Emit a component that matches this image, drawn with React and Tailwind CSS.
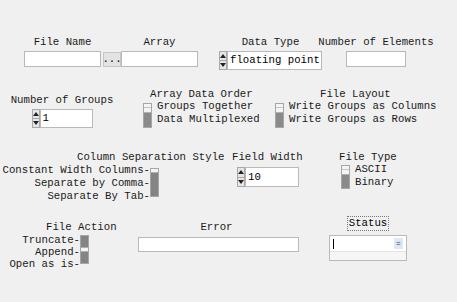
import React from 'react';

const font = { fontFamily: '"Liberation Mono", "DejaVu Sans Mono", monospace' };

const Label = ({ className = '', children }) => (
  <div className={`whitespace-pre leading-[13px] text-[10.7px] text-[#1a1a1a] ${className}`}>{children}</div>
);

const Box = ({ className = '', children }) => (
  <div className={`bg-white border border-[#b9b9b9] flex items-center pl-[2px] text-[10.7px] ${className}`}>{children}</div>
);

const Spin = ({ className = '' }) => (
  <div className={`w-[8px] flex flex-col border border-[#a8a8a8] bg-[#e6e6e6] ${className}`}>
    <div className="flex-1 flex items-center justify-center border-b border-[#a8a8a8]">
      <div className="w-0 h-0 border-l-[3px] border-r-[3px] border-b-[4px] border-l-transparent border-r-transparent border-b-[#222]" />
    </div>
    <div className="flex-1 flex items-center justify-center">
      <div className="w-0 h-0 border-l-[3px] border-r-[3px] border-t-[4px] border-l-transparent border-r-transparent border-t-[#222]" />
    </div>
  </div>
);

const Numeric = ({ value, w, h }) => (
  <div className="flex">
    <Spin className={h} />
    <Box className={`${w} ${h}`}>{value}</Box>
  </div>
);

// two-position vertical slide, thumb up, filled below
const Toggle = ({ className = '' }) => (
  <div className={`w-[9px] flex flex-col border border-[#a6a6a6] bg-[#8a8a8a] ${className}`}>
    <div className="h-[9px] bg-[#f4f4f4] border-b border-[#b0b0b0] flex flex-col">
      <div className="h-[4px] border-b border-[#c4c4c4]" />
    </div>
  </div>
);

const Choice = ({ options, gap = 'ml-[5px]', toggleTop = 'mt-[3px]', h = 'h-[25px]' }) => (
  <div className="flex items-start">
    <Toggle className={`${toggleTop} ${h}`} />
    <div className={`flex flex-col ${gap}`}>
      {options.map(o => <Label key={o}>{o}</Label>)}
    </div>
  </div>
);

export default function App() {
  return (
    <div className="w-[457px] h-[302px] bg-[#f0f0f0] overflow-hidden flex flex-col pt-[36px]" style={font}>
      {/* row 1 */}
      <div className="h-[52px] flex items-start pl-[24px]">
        <div className="w-[77px] flex flex-col items-center">
          <Label>File Name</Label>
          <Box className="mt-[2px] w-[77px] h-[16px]" />
        </div>
        <div className="ml-[2px] mt-[16px] w-[18px] h-[15px] bg-[#e3e3e3] border border-[#c6c6c6] text-[10.7px] leading-[13px] flex items-end justify-center">...</div>
        <div className="w-[77px] flex flex-col items-center">
          <Label>Array</Label>
          <Box className="mt-[2px] w-[77px] h-[16px]" />
        </div>
        <div className="ml-[21px] w-[103px] flex flex-col items-center">
          <Label>Data Type</Label>
          <div className="mt-[2px]">
            <Numeric value="floating point" w="w-[95px]" h="h-[19px]" />
          </div>
        </div>
        <div className="-ml-[4px] w-[116px] shrink-0 flex flex-col items-center">
          <Label>Number of Elements</Label>
          <Box className="mt-[2px] w-[60px] h-[16px]" />
        </div>
      </div>

      {/* row 2 */}
      <div className="h-[63px] flex items-start">
        <div className="ml-[11px] mt-[6px] w-[102px] flex flex-col items-center">
          <Label>Number of Groups</Label>
          <div className="mt-[2px]">
            <Numeric value="1" w="w-[53px]" h="h-[19px]" />
          </div>
        </div>
        <div className="ml-[30px] w-[132px] flex flex-col">
          <Label className="ml-[7px]">Array Data Order</Label>
          <div className="-mt-[1px]">
            <Choice options={['Groups Together', 'Data Multiplexed']} />
          </div>
        </div>
        <div className="flex flex-col">
          <Label className="ml-[45px]">File Layout</Label>
          <div className="-mt-[1px]">
            <Choice options={['Write Groups as Columns', 'Write Groups as Rows']} />
          </div>
        </div>
      </div>

      {/* row 3 */}
      <div className="h-[65px] flex items-start">
        <div className="w-[232px] flex flex-col">
          <Label className="ml-[77px]">Column Separation Style</Label>
          <div className="flex items-start">
            <div className="w-[150px] flex flex-col items-end">
              <Label>Constant Width Columns-</Label>
              <Label>Separate by Comma-</Label>
              <Label>Separate By Tab-</Label>
            </div>
            <div className="mt-[4px] w-[9px] h-[29px] flex flex-col border border-[#a6a6a6] bg-[#848484]">
              <div className="h-[4px] bg-[#f4f4f4] border-b border-[#b0b0b0]" />
            </div>
          </div>
        </div>
        <div className="w-[107px] flex flex-col">
          <Label>Field Width</Label>
          <div className="ml-[5px] mt-[3px]">
            <Numeric value="10" w="w-[54px]" h="h-[20px]" />
          </div>
        </div>
        <div className="flex flex-col">
          <Label>File Type</Label>
          <div className="ml-[2px] -mt-[1px]">
            <Choice options={['ASCII', 'Binary']} gap="ml-[5px]" toggleTop="mt-[2px]" h="h-[24px]" />
          </div>
        </div>
      </div>

      {/* row 4 */}
      <div className="flex items-start">
        <div className="w-[138px] mt-[5px] flex flex-col">
          <Label className="ml-[46px]">File Action</Label>
          <div className="flex items-start">
            <div className="w-[80px] flex flex-col items-end text-[10.7px] leading-[12px] text-[#1a1a1a] whitespace-pre">
              <div>Truncate-</div>
              <div>Append-</div>
              <div>Open as is-</div>
            </div>
            <div className="mt-[1px] w-[9px] h-[29px] flex flex-col border border-[#a6a6a6] bg-[#848484]">
              <div className="h-[11px]" />
              <div className="h-[5px] bg-[#f4f4f4] border-y border-[#b0b0b0]" />
            </div>
          </div>
        </div>
        <div className="mt-[5px] w-[161px] flex flex-col items-center">
          <Label className="ml-[-4px]">Error</Label>
          <Box className="mt-[3px] w-[161px] h-[15px]" />
        </div>
        <div className="ml-[30px] w-[78px] flex flex-col items-center">
          <div className="w-[42px] h-[15px] border border-dotted border-[#777] text-[10.7px] leading-[13px] flex items-center justify-center">Status</div>
          <div className="mt-[4px] w-[78px] h-[26px] border border-[#b9b9b9] bg-[#f6f6f6] flex flex-col">
            <div className="h-[15px] bg-white flex items-center justify-between px-[3px]">
              <div className="w-px h-[10px] bg-black" />
              <div className="w-[9px] h-[11px] bg-[#dce8f5] text-[8px] leading-[11px] text-center text-[#333]">=</div>
            </div>
            <div className="flex-1 border-t border-[#e4e4e4]" />
          </div>
        </div>
      </div>
    </div>
  );
}
